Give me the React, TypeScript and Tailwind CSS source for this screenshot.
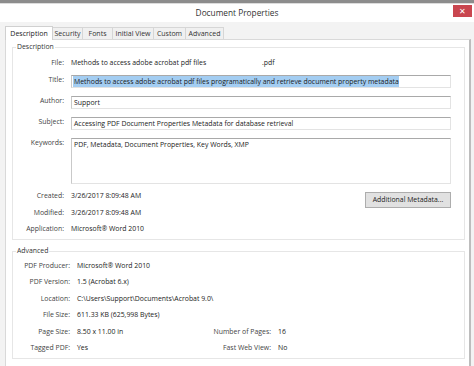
import React from 'react';

const font = { fontFamily: '"Open Sans", "Noto Sans", sans-serif' };

function Tab({ label, active, w }: { label: string; active?: boolean; w: string }) {
  if (active) {
    return (
      <div className={`${w} h-[14px] -mb-px border border-b-0 border-[#d0d0d0] bg-white flex items-center justify-center text-[#222] z-10`}>
        {label}
      </div>
    );
  }
  return (
    <div className={`${w} h-[12px] mt-[1px] border border-l-0 border-b-0 border-[#d6d6d6] bg-[#f0f0f0] flex items-center justify-center text-[#333]`}>
      {label}
    </div>
  );
}

function Field({ label, children, boxClass = 'h-[13px]' }: { label: string; children?: React.ReactNode; boxClass?: string }) {
  return (
    <div className="flex items-start">
      <div className="w-[51px] text-right text-[#444] pt-[2px]">{label}</div>
      <div className={`ml-[7px] flex-1 border border-[#e3e3e3] border-t-[#a9a9a9] border-l-[#c9c9c9] bg-white pl-[1px] text-[#222] ${boxClass}`}>
        {children}
      </div>
    </div>
  );
}

function InfoRow({ label, value }: { label: string; value: string }) {
  return (
    <div className="flex items-center">
      <div className="w-[51px] text-right text-[#444]">{label}</div>
      <div className="ml-[7px] text-[#222]">{value}</div>
    </div>
  );
}

function AdvRow({ label, value, label2, value2 }: { label: string; value: string; label2?: string; value2?: string }) {
  return (
    <div className="flex items-center h-[16.5px]">
      <div className="w-[57px] text-right text-[#444]">{label}</div>
      <div className="ml-[7px] w-[123px] text-[#222] whitespace-nowrap">{value}</div>
      {label2 && (
        <>
          <div className="w-[71px] text-right text-[#444] whitespace-nowrap">{label2}</div>
          <div className="ml-[7px] text-[#222]">{value2}</div>
        </>
      )}
    </div>
  );
}

export default function App() {
  return (
    <div className="w-[474px] h-[366px] overflow-hidden bg-[#f3f3f3] flex flex-col text-[6.9px] leading-none" style={font}>
      {/* top frame */}
      <div className="h-[3px] bg-[#8c8c8c] shrink-0" />
      <div className="h-px bg-[#dcdcdc] shrink-0" />

      {/* title bar */}
      <div className="relative h-[18px] bg-white flex items-center justify-center shrink-0">
        <span className="text-[8.3px] text-[#333]">Document Properties</span>
        <div className="absolute right-[2px] top-[1px] w-[19px] h-[12px] bg-[#c9464f] flex items-center justify-center text-white text-[8px]">
          ✕
        </div>
      </div>

      {/* tabs */}
      <div className="flex items-end pl-[5px] mt-[3px] h-[14px] shrink-0 text-[7px]">
        <Tab label="Description" active w="w-[48px]" />
        <Tab label="Security" w="w-[30px]" />
        <Tab label="Fonts" w="w-[30px]" />
        <Tab label="Initial View" w="w-[41px]" />
        <Tab label="Custom" w="w-[32px]" />
        <Tab label="Advanced" w="w-[38px]" />
      </div>

      {/* page */}
      <div className="ml-[5px] w-[466px] flex-1 border border-[#d9d9d9] border-r-[#bdbdbd] border-r-2 border-b-0 bg-white pl-[6px] pr-[4px] pt-[7px]">
        {/* Description group */}
        <div className="relative border border-[#e6e6e6] w-[453px] pr-[13px] pt-[8px] pb-[3px]">
          <span className="absolute -top-[4px] left-[3px] bg-white px-[1px] text-[#333]">Description</span>

          <div className="flex items-center h-[14px]">
            <div className="w-[51px] text-right text-[#444]">File:</div>
            <div className="ml-[7px] w-[191px] text-[#222] whitespace-nowrap">Methods to access adobe acrobat pdf files</div>
            <div className="text-[#222]">.pdf</div>
          </div>

          <div className="mt-[5px] flex flex-col gap-[8px]">
            <Field label="Title:">
              <span className="bg-[#a3cdf2] text-[#1a1a1a] inline-block h-[11px] leading-[11px] pl-[1px]">
                Methods to access adobe acrobat pdf files programatically and retrieve document property metadata
              </span>
            </Field>
            <Field label="Author:"><div className="leading-[11px] pl-[1px]">Support</div></Field>
            <Field label="Subject:"><div className="leading-[11px] pl-[1px]">Accessing PDF Document Properties Metadata for database retrieval</div></Field>
            <Field label="Keywords:" boxClass="h-[46px]"><div className="pt-[3px] pl-[1px]">PDF, Metadata, Document Properties, Key Words, XMP</div></Field>
          </div>

          <div className="mt-[5px] flex items-start">
            <div className="flex-1 flex flex-col">
              <div className="h-[14px] flex items-center"><InfoRow label="Created:" value="3/26/2017 8:09:48 AM" /></div>
              <div className="h-[3px]" />
              <div className="h-[14px] flex items-center"><InfoRow label="Modified:" value="3/26/2017 8:09:48 AM" /></div>
              <div className="h-[2px]" />
              <div className="h-[14px] flex items-center"><InfoRow label="Application:" value="Microsoft® Word 2010" /></div>
            </div>
            <div className="mt-[3px] w-[86px] h-[16px] border border-[#adadad] bg-[#e1e1e1] flex items-center justify-center text-[#222]">
              Additional Metadata...
            </div>
          </div>
        </div>

        {/* Advanced group */}
        <div className="relative border border-[#e6e6e6] w-[453px] mt-[11px] pt-[6px] pb-[1px]">
          <span className="absolute -top-[4px] left-[3px] bg-white px-[1px] text-[#333]">Advanced</span>
          <AdvRow label="PDF Producer:" value="Microsoft® Word 2010" />
          <AdvRow label="PDF Version:" value="1.5 (Acrobat 6.x)" />
          <AdvRow label="Location:" value="C:\Users\Support\Documents\Acrobat 9.0\" />
          <AdvRow label="File Size:" value="611.33 KB (625,998 Bytes)" />
          <AdvRow label="Page Size:" value="8.50 x 11.00 in" label2="Number of Pages:" value2="16" />
          <AdvRow label="Tagged PDF:" value="Yes" label2="Fast Web View:" value2="No" />
        </div>
      </div>
    </div>
  );
}
